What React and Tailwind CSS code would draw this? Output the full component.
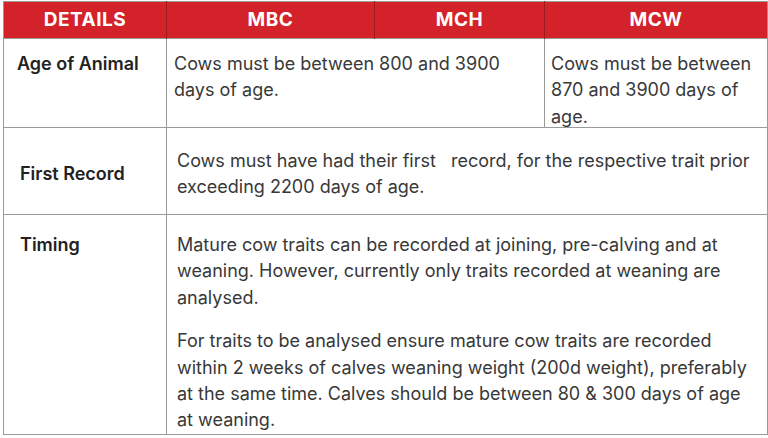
export default function App() {
  const border = "border-[1.5px] border-[#9a9a9a]";
  return (
    <div className="w-[768px] h-[438px] bg-white pt-px pl-[3px]" style={{ fontFamily: "Inter, Roboto, 'Liberation Sans', sans-serif" }}>
      <table className="w-[764px] border-collapse table-fixed text-[#383838]">
        <colgroup>
          <col className="w-[163px]" />
          <col className="w-[208px]" />
          <col className="w-[170px]" />
          <col className="w-[223px]" />
        </colgroup>
        <thead>
          <tr className="h-[37px] bg-[#d3222a] text-white text-[19px] tracking-[0.5px] font-bold">
            <th className="border-t-[1.5px] border-l-[1.5px] border-[#9a9a9a] border-r-[1.5px] border-r-[#9c1b20]">DETAILS</th>
            <th className="border-t-[1.5px] border-t-[#9a9a9a] border-r-[1.5px] border-r-[#9c1b20]">MBC</th>
            <th className="border-t-[1.5px] border-t-[#9a9a9a] border-r-[1.5px] border-r-[#9c1b20]">MCH</th>
            <th className="border-t-[1.5px] border-t-[#9a9a9a] border-r-[1.5px] border-r-[#9a9a9a]">MCW</th>
          </tr>
        </thead>
        <tbody className="text-[18px] leading-[26.4px]">
          <tr className="h-[89px]">
            <td className={`${border} align-top pl-[13px] pt-[12px] font-semibold text-[#222]`}>Age of Animal</td>
            <td colSpan={2} className={`${border} align-top pl-[7px] pt-[12px] pr-3`}>
              Cows must be between 800 and 3900<br />days of age.
            </td>
            <td className={`${border} align-top pl-[6px] pt-[12px] pr-2`}>
              <div className="h-[75px]">
                Cows must be between<br />870 and 3900 days of<br />age.
              </div>
            </td>
          </tr>
          <tr className="h-[87px]">
            <td className={`${border} align-middle pl-[16px] pt-[6px] font-semibold text-[#222]`}>First Record</td>
            <td colSpan={3} className={`${border} align-middle pl-[10px] pt-[6px]`}>
              Cows must have had their first&nbsp;&nbsp; record, for the respective trait prior<br />exceeding 2200 days of age.
            </td>
          </tr>
          <tr className="h-[217px]">
            <td className={`${border} align-top pl-[16px] pt-[17px] font-semibold text-[#222]`}>Timing</td>
            <td colSpan={3} className={`${border} align-top pl-[10px] pt-[17px] pr-3`}>
              <p className="whitespace-nowrap">
                Mature cow traits can be recorded at joining, pre-calving and at<br />
                weaning. However, currently only traits recorded at weaning are<br />
                analysed.
              </p>
              <p className="mt-[17px] whitespace-nowrap">
                For traits to be analysed ensure mature cow traits are recorded<br />
                within 2 weeks of calves weaning weight (200d weight), preferably<br />
                at the same time. Calves should be between 80 &amp; 300 days of age<br />
                at weaning.
              </p>
            </td>
          </tr>
        </tbody>
      </table>
    </div>
  );
}
